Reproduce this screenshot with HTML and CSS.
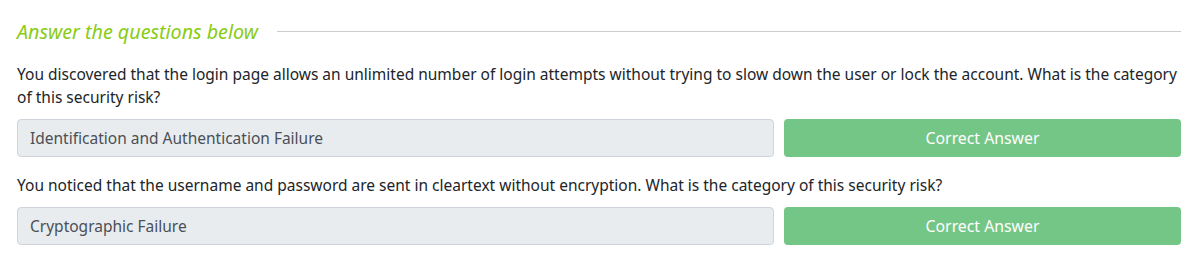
FILE: index.html
```html
<!DOCTYPE html>
<html>
<head>
<meta charset="utf-8">
<link rel="stylesheet" href="styles.css">
</head>
<body>
<div class="panel">
  <div class="heading">
    <span class="heading-text">Answer the questions below</span>
    <span class="heading-rule"></span>
  </div>
  <div class="question">
    <p class="q-text">You discovered that the login page allows an unlimited number of login attempts without trying to slow down the user or lock the account. What is the category of this security risk?</p>
    <div class="answer-row">
      <div class="answer-input">Identification and Authentication Failure</div>
      <div class="answer-btn">Correct Answer</div>
    </div>
  </div>
  <div class="question">
    <p class="q-text">You noticed that the username and password are sent in cleartext without encryption. What is the category of this security risk?</p>
    <div class="answer-row">
      <div class="answer-input">Cryptographic Failure</div>
      <div class="answer-btn">Correct Answer</div>
    </div>
  </div>
</div>
</body>
</html>
```
FILE: styles.css
```css
html, body {
  margin: 0;
  padding: 0;
  background: #ffffff;
}
body {
  font-family: "Noto Sans", "Open Sans", sans-serif;
  color: #212529;
}
.panel {
  padding: 19px 16px 0 17px;
}
.heading {
  display: flex;
  align-items: center;
  gap: 19px;
  height: 24px;
}
.heading-text {
  font-style: italic;
  font-size: 19.7px;
  color: #88cc14;
  white-space: nowrap;
}
.heading-rule {
  flex: 1;
  height: 1px;
  background: #cccccc;
}
.q-text {
  margin: 20px 0 0 0;
  font-size: 15.5px;
  line-height: 23px;
}
.question + .question .q-text {
  margin-top: 17px;
}
.answer-row {
  display: grid;
  grid-template-columns: 757px 1fr;
  gap: 10px;
  margin-top: 10px;
}
.answer-input {
  height: 36px;
  border: 1px solid #ced4da;
  border-radius: 4px;
  background: #e9ecef;
  color: #495057;
  font-size: 15.5px;
  line-height: 36px;
  padding: 0 12px;
}
.answer-btn {
  height: 38px;
  border-radius: 4px;
  background: #74c686;
  color: #ffffff;
  font-size: 15.8px;
  line-height: 38px;
  text-align: center;
}
```
